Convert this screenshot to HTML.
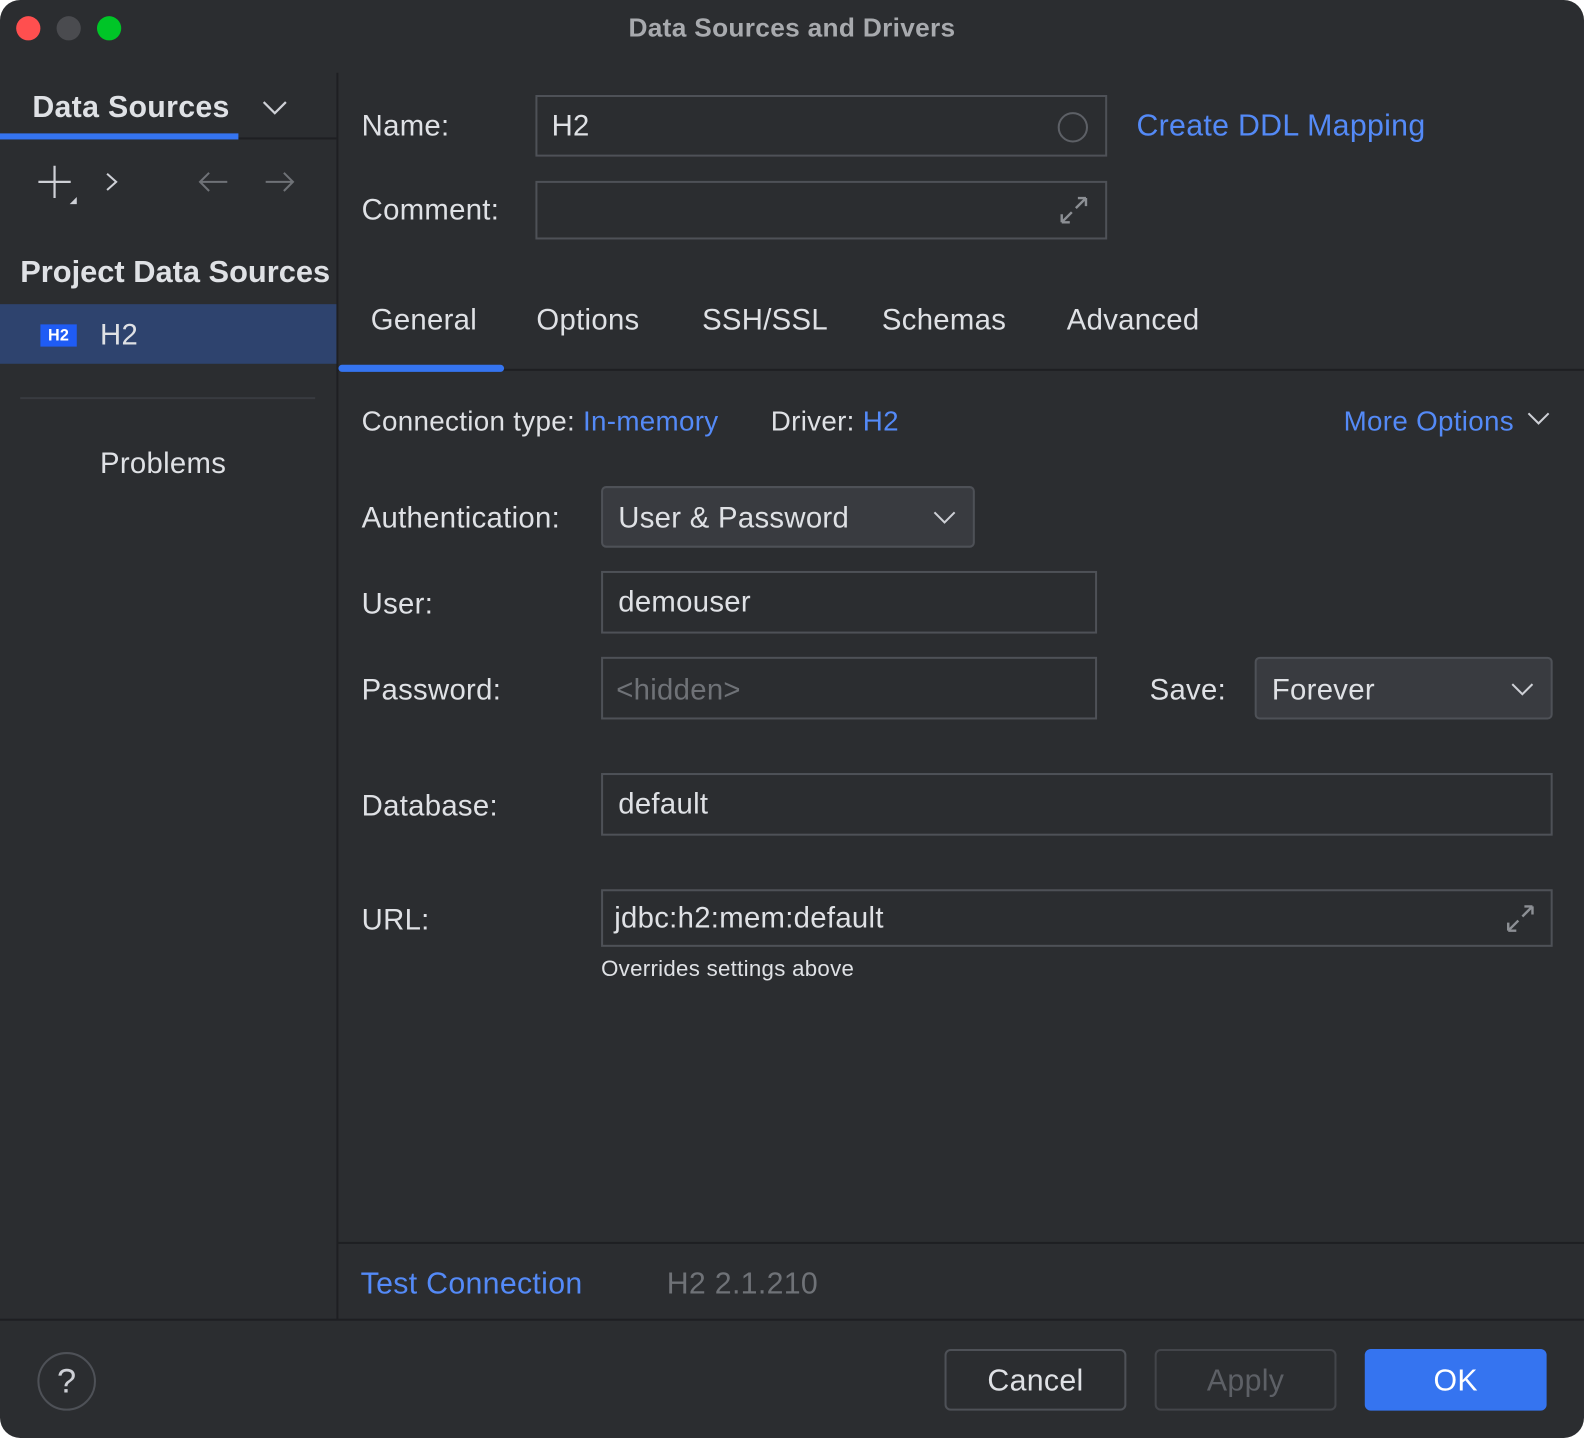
<!DOCTYPE html>
<html><head><meta charset="utf-8"><style>
html,body{margin:0;padding:0;background:#fff;width:1584px;height:1438px;overflow:hidden}
#w{position:absolute;left:0;top:0;width:1568px;height:1423px;background:#2b2d30;border-radius:20px;overflow:hidden;font-family:"Liberation Sans",sans-serif;color:#dfe1e5;transform-origin:0 0;transform:scale(1.0102,1.0105);letter-spacing:0.3px}
.t{position:absolute;white-space:nowrap;line-height:40px;height:40px;font-size:29px;margin-top:1px}
.l{color:#548af7}
.in{position:absolute;box-sizing:border-box;border:2px solid #4e5157;background:#2b2d30}
.cb{position:absolute;box-sizing:border-box;border:2px solid #4e5157;background:#393b40;border-radius:5px}
.hl{position:absolute;height:2px;background:#1e1f22}
.btn{position:absolute;box-sizing:border-box;border:2px solid #4e5157;border-radius:6px;top:1335px;height:61px;width:180px;text-align:center;line-height:59px;font-size:30px}
svg{position:absolute;overflow:visible}
</style></head><body><div id="w">
<div style="position:absolute;left:16px;top:16px;width:24px;height:24px;border-radius:50%;background:#ff4f4f"></div>
<div style="position:absolute;left:56px;top:16px;width:24px;height:24px;border-radius:50%;background:#4a4b4f"></div>
<div style="position:absolute;left:96px;top:16px;width:24px;height:24px;border-radius:50%;background:#00c527"></div>
<div class="t" style="left:0;width:1568px;text-align:center;top:6px;font-size:26px;font-weight:bold;color:#a8aaae">Data Sources and Drivers</div>

<div style="position:absolute;left:333px;top:72px;width:2px;height:1234px;background:#1e1f22"></div>
<div class="t" style="left:32px;top:86px;font-weight:bold;font-size:30px">Data Sources</div>
<svg style="left:260px;top:100px" width="24" height="14"><path d="M1 1 L12 12 L23 1" fill="none" stroke="#ced0d6" stroke-width="2.2"/></svg>
<div class="hl" style="left:0;top:136px;width:333px"></div>
<div style="position:absolute;left:0;top:132px;width:236px;height:6px;background:#3574f0"></div>
<svg style="left:38px;top:164px" width="40" height="40"><path d="M16 0V32M0 16H32" stroke="#ced0d6" stroke-width="2.2"/><path d="M38 38H31L38 31Z" fill="#ced0d6"/></svg>
<svg style="left:104px;top:171px" width="14" height="18"><path d="M2 1L11 9L2 17" fill="none" stroke="#ced0d6" stroke-width="2"/></svg>
<svg style="left:196px;top:170px" width="30" height="20"><path d="M29 10H2M11 1L2 10L11 19" fill="none" stroke="#6f7277" stroke-width="2"/></svg>
<svg style="left:262px;top:170px" width="30" height="20"><path d="M1 10H28M19 1L28 10L19 19" fill="none" stroke="#6f7277" stroke-width="2"/></svg>
<div class="t" style="left:20px;top:248px;font-weight:bold;font-size:30.5px;letter-spacing:0">Project Data Sources</div>
<div style="position:absolute;left:0;top:301px;width:333px;height:59px;background:#2e436e"></div>
<div style="position:absolute;left:40px;top:321px;width:36px;height:22px;background:#1f5cf5;color:#fff;font-size:16px;font-weight:bold;line-height:24px;text-align:center">H2</div>
<div class="t" style="left:99px;top:311px">H2</div>
<div class="hl" style="left:20px;top:393px;width:292px;background:#393b40"></div>
<div class="t" style="left:99px;top:438px">Problems</div>

<div class="t" style="left:358px;top:104px">Name:</div>
<div class="in" style="left:530px;top:94px;width:566px;height:61px"></div>
<div class="t" style="left:546px;top:104px">H2</div>
<div style="position:absolute;left:1047px;top:111px;width:26px;height:26px;border:2px solid #5d6066;border-radius:50%"></div>
<div class="t l" style="left:1125px;top:104px;font-size:30px">Create DDL Mapping</div>
<div class="t" style="left:358px;top:187px">Comment:</div>
<div class="in" style="left:530px;top:179px;width:566px;height:58px"></div>
<svg style="left:1048px;top:193px" width="30" height="30"><path d="M3 27L13 17M3 27V19M3 27H11M27 3L17 13M27 3V11M27 3H19" fill="none" stroke="#8c8f94" stroke-width="2.4"/></svg>

<div class="t" style="left:367px;top:296px">General</div>
<div class="t" style="left:531px;top:296px">Options</div>
<div class="t" style="left:695px;top:296px">SSH/SSL</div>
<div class="t" style="left:873px;top:296px">Schemas</div>
<div class="t" style="left:1056px;top:296px">Advanced</div>
<div class="hl" style="left:335px;top:365px;width:1249px"></div>
<div style="position:absolute;left:335px;top:361px;width:164px;height:7px;border-radius:4px;background:#3574f0"></div>

<div class="t" style="left:358px;top:396px;font-size:27.5px">Connection type: <span class="l">In-memory</span></div>
<div class="t" style="left:763px;top:396px;font-size:27.5px">Driver: <span class="l">H2</span></div>
<div class="t l" style="left:1330px;top:396px;font-size:27.5px">More Options</div>
<svg style="left:1512px;top:408px" width="22" height="12"><path d="M1 1L11 11L21 1" fill="none" stroke="#ced0d6" stroke-width="2"/></svg>

<div class="t" style="left:358px;top:492px">Authentication:</div>
<div class="cb" style="left:595px;top:481px;width:370px;height:61px"></div>
<div class="t" style="left:612px;top:492px">User &amp; Password</div>
<svg style="left:924px;top:506px" width="22" height="12"><path d="M1 1L11 11L21 1" fill="none" stroke="#ced0d6" stroke-width="2"/></svg>

<div class="t" style="left:358px;top:577px">User:</div>
<div class="in" style="left:595px;top:565px;width:491px;height:62px"></div>
<div class="t" style="left:612px;top:575px">demouser</div>

<div class="t" style="left:358px;top:662px">Password:</div>
<div class="in" style="left:595px;top:650px;width:491px;height:62px"></div>
<div class="t" style="left:610px;top:662px;color:#6f7277">&lt;hidden&gt;</div>
<div class="t" style="left:1138px;top:662px">Save:</div>
<div class="cb" style="left:1242px;top:650px;width:295px;height:62px"></div>
<div class="t" style="left:1259px;top:662px">Forever</div>
<svg style="left:1496px;top:676px" width="22" height="12"><path d="M1 1L11 11L21 1" fill="none" stroke="#ced0d6" stroke-width="2"/></svg>

<div class="t" style="left:358px;top:777px">Database:</div>
<div class="in" style="left:595px;top:765px;width:942px;height:62px"></div>
<div class="t" style="left:612px;top:775px">default</div>

<div class="t" style="left:358px;top:890px">URL:</div>
<div class="in" style="left:595px;top:880px;width:942px;height:57px"></div>
<div class="t" style="left:608px;top:888px">jdbc:h2:mem:default</div>
<svg style="left:1490px;top:894px" width="30" height="30"><path d="M3 27L13 17M3 27V19M3 27H11M27 3L17 13M27 3V11M27 3H19" fill="none" stroke="#8c8f94" stroke-width="2.4"/></svg>
<div class="t" style="left:595px;top:938px;font-size:22px">Overrides settings above</div>

<div class="hl" style="left:335px;top:1229px;width:1249px"></div>
<div class="t l" style="left:357px;top:1250px;font-size:30px">Test Connection</div>
<div class="t" style="left:660px;top:1250px;font-size:30px;color:#6f7277">H2 2.1.210</div>
<div class="hl" style="left:0;top:1305px;width:1584px"></div>

<div style="position:absolute;left:37px;top:1338px;width:54px;height:54px;border:2px solid #4e5157;border-radius:50%;text-align:center;line-height:54px;font-size:34px;color:#ced0d6">?</div>
<div class="btn" style="left:935px">Cancel</div>
<div class="btn" style="left:1143px;color:#5d6066;border-color:#43454a">Apply</div>
<div class="btn" style="left:1351px;background:#3574f0;border-color:#3574f0;color:#fff">OK</div>
</div></body></html>
